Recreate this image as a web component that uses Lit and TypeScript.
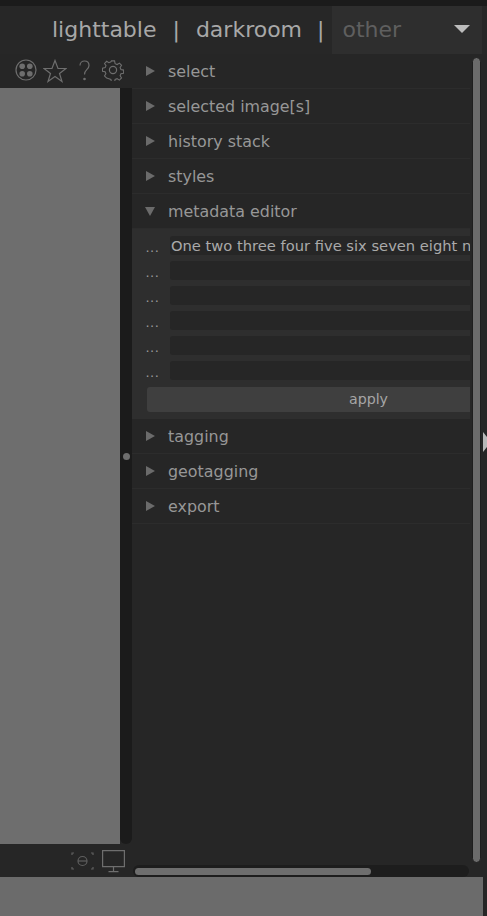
import { LitElement, html, css } from "lit";
import { customElement } from "lit/decorators.js";

@customElement("app-root")
export class AppRoot extends LitElement {
  static styles = css`
    :host { display: block; width: 487px; height: 916px; overflow: hidden; background: #262626; font-family: "DejaVu Sans", sans-serif; color: #a0a0a0; }
    .top { height: 6px; background: #1b1b1b; }
    .head { height: 48px; display: flex; align-items: center; padding-left: 52px; font-size: 22px; color: #a8a8a8; white-space: pre; background: #272727; }
    .head > span { padding-bottom: 2px; }
    .sep { margin: 0 16px 0 16px; }
    .sep2 { margin: 0 8px 0 15px; }
    .combo { width: 150px; height: 48px; box-sizing: border-box; background: #2e2e2e; display: flex; align-items: center; justify-content: space-between; padding: 0 12px 2px 11px; color: #5f5f5f; margin-right: 5px; flex: none; }
    .combo span:first-child { margin-left: -1px; }
    .caret { width: 0; height: 0; border-left: 8px solid transparent; border-right: 8px solid transparent; border-top: 8px solid #bcbcbc; }
    .main { display: flex; height: 823px; }
    .left { width: 120px; flex: none; display: flex; flex-direction: column; }
    .tools { width: 132px; height: 34px; flex: none; position: relative; }
    .tools svg { position: absolute; top: 5px; }
    .image { flex: 1; background: #6e6e6e; }
    .bot { height: 33px; width: 126px; flex: none; position: relative; }
    .bot svg { position: absolute; }
    .handle { width: 12px; flex: none; margin-top: 34px; height: 756px; background: #1b1b1b; border-radius: 0 0 6px 6px; position: relative; }
    .dot { position: absolute; left: 2.5px; top: 365px; width: 7px; height: 7px; border-radius: 50%; background: #6e6e6e; }
    .right { flex: 1; position: relative; min-width: 0; }
    .panel { width: 338px; overflow: hidden; }
    .mod { height: 35px; box-sizing: border-box; display: flex; align-items: center; font-size: 15.9px; color: #979797; border-bottom: 1px solid #2c2c2c; }
    .arrow { width: 0; height: 0; margin-left: 14px; margin-right: 13px; border-top: 5px solid transparent; border-bottom: 5px solid transparent; border-left: 9px solid #6b6b6b; }
    .arrow.open { border-left: 5px solid transparent; border-right: 5px solid transparent; border-top: 9px solid #6b6b6b; border-bottom: 0; margin-left: 13px; margin-right: 13px; }
    .body { height: 190px; background: #2e2e2e; padding-top: 4px; box-sizing: border-box; }
    .row { height: 25px; display: flex; align-items: center; }
    .dots { width: 38px; flex: none; text-align: center; font-size: 13px; letter-spacing: .6px; color: #9a9a9a; padding-left: 3px; box-sizing: border-box; line-height: 1; padding-top: 3px; }
    .field { flex: 1; height: 19px; border-radius: 3px 0 0 3px; background: #262626; overflow: hidden; white-space: nowrap; font-size: 14.7px; color: #aaaaaa; line-height: 19px; padding-left: 1px; min-width: 0; }
    .apply { margin: 4px 0 0 15px; height: 25px; border-radius: 3px 0 0 3px; background: #3f3f3f; font-size: 14.2px; color: #a6a6a6; text-align: center; line-height: 24px; padding-left: 120px; }
    .vs { position: absolute; left: 340px; top: 3px; width: 9px; height: 806px; background: #6b6b6b; border-radius: 5px; border: 1px solid #1e1e1e; box-sizing: border-box; }
    .hs { position: absolute; left: 1px; top: 811px; width: 336px; height: 12px; border-radius: 6px; background: #1d1d1d; }
    .hs i { display: block; width: 236px; height: 7px; margin: 3px 0 0 2px; border-radius: 4px; background: #6e6e6e; }
    .tri { position: absolute; left: 351px; top: 378px; width: 0; height: 0; border-top: 10px solid transparent; border-bottom: 10px solid transparent; border-left: 8px solid #b8b8b8; }
    .foot { height: 39px; background: #6b6b6b; margin-right: 4px; }
  `;
  private mod(t: string, open = false) {
    return html`<div class="mod"><span class="arrow ${open ? "open" : ""}"></span>${t}</div>`;
  }
  render() {
    const rows = ["One two three four five six seven eight nine ten", "", "", "", "", ""];
    return html`
      <div class="top"></div>
      <div class="head"><span>lighttable</span><span class="sep">|</span><span>darkroom</span><span class="sep2">|</span>
        <div class="combo"><span>other</span><span class="caret"></span></div></div>
      <div class="main">
        <div class="left">
          <div class="tools">
            <svg style="left:15px" width="22" height="22" viewBox="0 0 22 22" fill="none" stroke="#6e6e6e" stroke-width="1.2"><circle cx="11" cy="11" r="10"/><g fill="#6e6e6e" stroke="none"><circle cx="7.2" cy="7.2" r="2.8"/><circle cx="14.8" cy="7.2" r="2.8"/><circle cx="7.2" cy="14.8" r="2.8"/><circle cx="14.8" cy="14.8" r="2.8"/></g></svg>
            <svg style="left:43px" width="24" height="24" viewBox="0 0 24 24" fill="none" stroke="#6e6e6e" stroke-width="1.2"><path d="M12 1.5l3 8h8l-6.5 5 2.5 8-7-5-7 5 2.5-8L1 9.5h8z"/></svg>
            <svg style="left:76px" width="16" height="24" viewBox="0 0 16 24" fill="none" stroke="#6e6e6e" stroke-width="1.2"><path d="M4 6.500c0-6 9-6 9 0 0 4-4.500 4-4.500 9"/><circle cx="8.500" cy="20" r=".7" fill="#6e6e6e"/></svg>
            <svg style="left:102px" width="22" height="22" viewBox="0 0 22 22" fill="none" stroke="#6e6e6e" stroke-width="1.2"><circle cx="11" cy="11" r="3.600"/><path d="M9.300 1h3.400l.6 3 2.200 1 2.600-1.600 2.300 2.400-1.600 2.500.9 2.200 3 .6-.1 3.400-2.900.6-.9 2.200 1.600 2.500-2.400 2.300-2.500-1.600-2.200.9-.6 2.900H9.300l-.6-2.900-2.200-.9L4 19.900l-2.400-2.300 1.600-2.500-.9-2.200-2.900-.6V9l3-.6.900-2.200L1.700 3.800 4 1.400 6.500 3l2.200-1z" transform="translate(1 1) scale(.91)"/></svg>
          </div>
          <div class="image"></div>
          <div class="bot">
            <svg style="left:71px;top:8px" width="23" height="18" viewBox="0 0 23 18" fill="none" stroke="#5f5f5f" stroke-width="1.200"><path d="M1 3V1h2M20 1h2v2M1 15v2h2M22 15v2h-2"/><circle cx="11.500" cy="9" r="4.500"/><path d="M7 9h9"/></svg>
            <svg style="left:102px;top:6px" width="23" height="23" viewBox="0 0 23 23" fill="none" stroke="#6e6e6e" stroke-width="1.200"><path d="M.6.600h21.800v16H.6zM11.500 16.600v5M6.500 21.600h10"/></svg>
          </div>
        </div>
        <div class="handle"><div class="dot"></div></div>
        <div class="right">
          <div class="panel">
            ${this.mod("select")}${this.mod("selected image[s]")}${this.mod("history stack")}${this.mod("styles")}${this.mod("metadata editor", true)}
            <div class="body">
              ${rows.map((r) => html`<div class="row"><span class="dots">...</span><div class="field">${r}</div></div>`)}
              <div class="apply">apply</div>
            </div>
            ${this.mod("tagging")}${this.mod("geotagging")}${this.mod("export")}
          </div>
          <div class="vs"></div>
          <div class="hs"><i></i></div>
          <div class="tri"></div>
        </div>
      </div>
      <div class="foot"></div>`;
  }
}
